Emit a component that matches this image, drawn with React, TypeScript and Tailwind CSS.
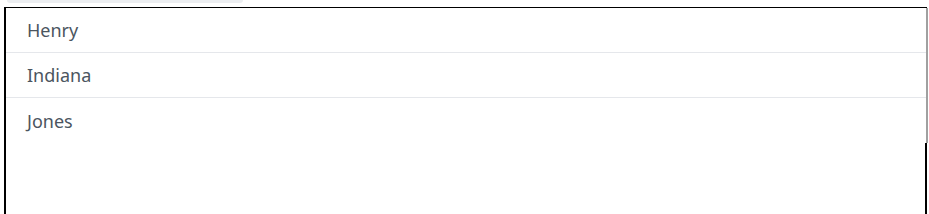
import React from 'react';

const names = ['Henry', 'Indiana', 'Jones'];

export default function App() {
  return (
    <div className="relative h-[214px] w-[929px] bg-white overflow-hidden" style={{ fontFamily: '"Noto Sans", "Open Sans", sans-serif' }}>
      <div className="ml-[7px] h-[3px] w-[236px] rounded-b bg-[#eceef1]" />
      <div className="ml-[4px] mt-[4px] h-[207px] w-[923px] border-x-2 border-t-2 border-black" />

      {/* dropdown list lying over the box */}
      <ul className="absolute left-[6px] top-[8px] w-[922px] border-r-2 border-[#a0a0a0] bg-white">
        {names.map((name, i) => (
          <li
            key={name}
            className={`h-[45px] flex items-center pl-[21px] pt-[1px] text-[18px] text-[#4b5560] ${i < names.length - 1 ? 'border-b border-[#e5e7eb]' : ''}`}
          >
            {name}
          </li>
        ))}
      </ul>
    </div>
  );
}
